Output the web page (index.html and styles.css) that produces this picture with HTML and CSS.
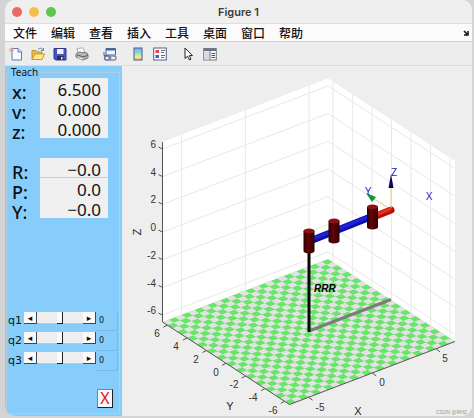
FILE: index.html
```
<!DOCTYPE html>
<html lang="zh">
<head>
    <meta charset="UTF-8">
    <meta name="viewport" content="width=device-width, initial-scale=1.0">
    <title>Figure 1</title>
    <link rel="stylesheet" href="styles.css">
</head>
<body>

<div class="window">
    <!-- 标题栏 -->
    <header class="titlebar">
        <div class="lights">
            <button class="light red" aria-label="关闭"></button>
            <button class="light yellow" aria-label="最小化"></button>
            <button class="light green" aria-label="缩放"></button>
        </div>
        <h1>Figure 1</h1>
    </header>

    <!-- 菜单 -->
    <nav class="menubar">
        <button>文件</button>
        <button>编辑</button>
        <button>查看</button>
        <button>插入</button>
        <button>工具</button>
        <button>桌面</button>
        <button>窗口</button>
        <button>帮助</button>
        <button class="dock" aria-label="停靠">
            <svg width="6" height="6" viewBox="0 0 6 6"><path d="M1 1L4 4M5 1V5H1" fill="none" stroke="#111" stroke-width="1.5"/></svg>
        </button>
    </nav>

    <!-- 工具栏 -->
    <div class="toolbar">
        <button aria-label="新建">
            <svg viewBox="0 0 14 14"><path d="M3 1.500H9L12.500 5V13H3Z" fill="#f8fbff" stroke="#607da8"/><path d="M9 1.500V5H12.500" fill="#cfdcf0" stroke="#607da8"/><path d="M0 3H5M2.500 .5V5.500M.8 1.200L4.200 4.800M4.200 1.200L.8 4.800" stroke="#ee9a75"/></svg>
        </button>
        <button aria-label="打开">
            <svg viewBox="0 0 14 14"><path d="M1 12.500V3.500H5L6 5H11V12.500Z" fill="#e9bd45" stroke="#b8923a"/><path d="M1 12.500L4 7H13.500L11 12.500Z" fill="#ffe98c" stroke="#c39a35"/><path d="M7 2.500C9 .5 11 1 12 3M12.500 1V3.500H10" fill="none" stroke="#5d8398"/></svg>
        </button>
        <button aria-label="保存">
            <svg viewBox="0 0 14 14"><path d="M1 1.500H13V13H2.500L1 11.500Z" fill="#4854bb" stroke="#30398d"/><path d="M4 2H10.500V7H4Z" fill="#eaf0ff"/><path d="M4 9H10.500V13H4Z" fill="#252c67"/><path d="M8 10H9.500V12.500H8Z" fill="#eee"/></svg>
        </button>
        <button aria-label="打印">
            <svg viewBox="0 0 14 14"><path d="M3 6L2 1.500L8 .8L10 6" fill="#fff" stroke="#aaa"/><path d="M1 7L4 5L12 6L13 8V11L8 13L1 10Z" fill="#b9b9b9" stroke="#777"/><path d="M2 8L9 10L13 8" fill="none" stroke="#555"/><path d="M3 10.500L8 12" stroke="#eee"/></svg>
        </button>
        <button class="gap" aria-label="链接绘图">
            <svg viewBox="0 0 14 14"><path d="M3 1.500H12.500V8H3Z" fill="#eef5ff" stroke="#49649a"/><path d="M3 2.500H12.500" stroke="#49649a" stroke-width="2"/><path d="M1 5V8.500H4" fill="none" stroke="#49649a"/><rect x="1.500" y="9" width="6" height="4" rx="2" fill="none" stroke="#5a6f96" stroke-width="1.400"/><rect x="6" y="9" width="7" height="4" rx="2" fill="none" stroke="#7b8caa" stroke-width="1.400"/></svg>
        </button>
        <button class="gap" aria-label="颜色栏">
            <svg viewBox="0 0 14 14"><defs><linearGradient id="bar" x2="0" y2="1"><stop stop-color="#83a6ed"/><stop offset=".4" stop-color="#7ee0dc"/><stop offset=".75" stop-color="#f4ee8c"/><stop offset="1" stop-color="#eeae75"/></linearGradient></defs><rect x="3" y="1" width="8" height="12" fill="url(#bar)" stroke="#4d5b88"/></svg>
        </button>
        <button aria-label="图例">
            <svg viewBox="0 0 14 14"><rect x=".7" y="1" width="12.600" height="12" fill="#fff" stroke="#555c87"/><path d="M2.500 3H6V6H2.500Z" fill="#e24540"/><path d="M2.500 8H6V11H2.500Z" fill="#475bd0"/><path d="M8 3.500H12M8 5.500H11M8 8.500H12M8 10.500H11" stroke="#666"/></svg>
        </button>
        <button class="gap" aria-label="编辑绘图">
            <svg viewBox="0 0 14 14"><path d="M4 1V11.500L6.500 9.200L8.500 13L10 12.200L8.300 8.600H11.500Z" fill="#fff" stroke="#222"/></svg>
        </button>
        <button aria-label="属性检查器">
            <svg viewBox="0 0 14 14"><rect x=".7" y="1.500" width="12.600" height="11.500" fill="#f7f7f7" stroke="#777b86"/><path d="M1 3H13" stroke="#5f7090" stroke-width="2"/><path d="M1.500 4.500H6.500V12.500H1.500Z" fill="#d9d9d9"/><path d="M7 4V13" stroke="#777"/><path d="M8.500 6.500H12M8.500 8.500H12M8.500 10.500H12" stroke="#555"/></svg>
        </button>
    </div>

    <main class="content">
        <!-- 示教面板 -->
        <aside class="side">
            <fieldset class="teach">
                <legend>Teach</legend>
                <dl class="pose">
                    <dt>x:</dt><dd>6.500</dd>
                    <dt>v:</dt><dd>0.000</dd>
                    <dt>z:</dt><dd>0.000</dd>
                </dl>
                <dl class="pose">
                    <dt>R:</dt><dd class="line">−0.0</dd>
                    <dt>P:</dt><dd>0.0</dd>
                    <dt>Y:</dt><dd>−0.0</dd>
                </dl>
                <div class="joints">
                    <div class="joint">
                        <label for="q1">q1</label>
                        <button aria-label="q1 减">◂</button>
                        <input type="range" id="q1" min="-180" max="180" value="0">
                        <button aria-label="q1 加">▸</button>
                        <output for="q1">0</output>
                    </div>
                    <div class="joint">
                        <label for="q2">q2</label>
                        <button aria-label="q2 减">◂</button>
                        <input type="range" id="q2" min="-180" max="180" value="0">
                        <button aria-label="q2 加">▸</button>
                        <output for="q2">0</output>
                    </div>
                    <div class="joint">
                        <label for="q3">q3</label>
                        <button aria-label="q3 减">◂</button>
                        <input type="range" id="q3" min="-180" max="180" value="0">
                        <button aria-label="q3 加">▸</button>
                        <output for="q3">0</output>
                    </div>
                </div>
                <button class="quit">X</button>
            </fieldset>
        </aside>

        <!-- 三维坐标区 -->
        <svg class="plot" viewBox="122 66 350 350">
            <defs>
                <pattern id="tiles" width="2" height="2" patternUnits="userSpaceOnUse" patternTransform="matrix(6.365 -2.423 4.885 3.173 162.5 322)">
                    <rect width="2" height="2" fill="#e4e1e2"/>
                    <path d="M1 0H2V1H1ZM0 1H1V2H0Z" fill="#69e56c"/>
                </pattern>
                <linearGradient id="joint">
                    <stop stop-color="#2c0000"/>
                    <stop offset=".4" stop-color="#620508"/>
                    <stop offset="1" stop-color="#300000"/>
                </linearGradient>
                <g id="cylinder">
                    <path d="M-5.500 2V22A5.500 2.500 0 0 0 5.500 22V2Z" fill="url(#joint)"/>
                    <ellipse cy="2" rx="5.500" ry="2.500" fill="#8c1014"/>
                </g>
            </defs>

            <path d="M162.500 322V142L328 78.500L455 161V341.500L328 259Z" fill="#fff"/>
            <path class="grid" d="M181.600 315V135M245.300 290V110M309 266V86M332.900 262V82M352.400 275V95M372 287.500V107.500M391.500 300V120M411 313V133M430.600 325.500V145.500M450 338V158"/>
            <path class="grid" d="M162.500 315L328 252L455 334.500M162.500 287.400L328 224.400L455 306.900M162.500 259.700L328 196.700L455 279.200M162.500 232L328 169L455 251.500M162.500 204.300L328 141.300L455 223.800M162.500 176.600L328 113.600L455 196.100M162.500 149L328 86L455 168.500"/>
            <path d="M162.500 322L289.500 404.500L455 341.500L328 259Z" fill="url(#tiles)"/>
            <path class="axis" d="M162.500 142V322L289.500 404.500L455 341.500"/>
            <path class="axis" d="M162.500 315l-4-2M162.500 287.400l-4-2M162.500 259.700l-4-2M162.500 232l-4-2M162.500 204.300l-4-2M162.500 176.600l-4-2M162.500 149l-4-2"/>
            <path class="axis" d="M167.400 325.200l-4 2M187 338l-4 2M206.500 350.500l-4 2M226 363.300l-4 2M245.600 376l-4 2M265 388.600l-4 2M284.700 401.300l-4 2M308.600 397.200l4 3M372.300 373l4 3M436 348.800l4 3"/>

            <g class="ticks" text-anchor="end">
                <text x="156" y="148">6</text>
                <text x="156" y="176">4</text>
                <text x="156" y="203">2</text>
                <text x="156" y="231">0</text>
                <text x="156" y="259">-2</text>
                <text x="156" y="287">-4</text>
                <text x="156" y="314">-6</text>
            </g>
            <g class="ticks" text-anchor="middle">
                <text x="157" y="337">6</text>
                <text x="176" y="350">4</text>
                <text x="196" y="363">2</text>
                <text x="216" y="376">0</text>
                <text x="234" y="388">-2</text>
                <text x="253" y="401">-4</text>
                <text x="273" y="414">-6</text>
                <text x="320" y="411">-5</text>
                <text x="382" y="386">0</text>
                <text x="445" y="362">5</text>
            </g>
            <g class="names" text-anchor="middle">
                <text transform="translate(141 232) rotate(-90)">Z</text>
                <text x="230" y="410">Y</text>
                <text x="358" y="415">X</text>
            </g>

            <!-- 机械臂 -->
            <path d="M309 331L391 299.500" stroke="#7c7c79" stroke-width="3"/>
            <path d="M309 248V332" stroke="#080808" stroke-width="3"/>
            <path d="M310 241L373 216" stroke="#1010a8" stroke-width="7"/>
            <path d="M310 240L373 215" stroke="#2020dd" stroke-width="3"/>
            <path d="M376 216L391 210" stroke="#b51006" stroke-width="7" stroke-linecap="round"/>
            <path d="M376 215L390 209" stroke="#ee2d1c" stroke-width="3" stroke-linecap="round"/>
            <use href="#cylinder" x="309" y="229"/>
            <use href="#cylinder" x="334" y="219"/>
            <use href="#cylinder" x="372.500" y="205"/>
            <path d="M391 208V188M387 207L374 199" stroke="#e6c990" fill="none"/>
            <path d="M391 174L388.500 188H393.500Z" fill="#08085c"/>
            <path d="M366 193L376 197L372 202Z" fill="#149638"/>
            <g class="frame" text-anchor="middle">
                <text x="394" y="176">Z</text>
                <text x="368" y="195">Y</text>
                <text x="429" y="200">X</text>
            </g>
            <text class="robot" x="314" y="292">RRR</text>
            <text class="mark" x="436" y="414">CSDN @RHZ_J</text>
        </svg>
    </main>
</div>

</body>
</html>
```
FILE: styles.css
```
* {
    box-sizing: border-box;
}
body {
    margin: 0;
    min-height: 100vh;
    display: flex;
    padding: 0 2px 2px 5px;
    background: #d4d4d4;
    font-family: "Noto Sans", "Noto Sans CJK SC", sans-serif;
    color: #111;
}
button {
    margin: 0;
    padding: 0;
    border: none;
    background: none;
    font: inherit;
    color: inherit;
}
.window {
    flex: 1;
    display: flex;
    flex-direction: column;
    background: #eee;
    border-radius: 10px;
    overflow: hidden;
}

/* 标题栏 */
.titlebar {
    display: grid;
    grid-template-columns: 1fr auto 1fr;
    align-items: center;
    height: 24px;
    padding: 0 7px;
    background: #f0efef;
    border-bottom: 1px solid #dedede;
}
.titlebar h1 {
    margin: 0;
    font: 600 11px "Inter", sans-serif;
    color: #3c3c3c;
}
.lights {
    display: flex;
    gap: 7px;
}
.light {
    width: 10px;
    height: 10px;
    border-radius: 50%;
}
.red {
    background: #ec6a5e;
}
.yellow {
    background: #f4bf4f;
}
.green {
    background: #61c554;
}

/* 菜单 */
.menubar {
    display: flex;
    align-items: center;
    gap: 14px;
    height: 18px;
    padding: 0 3px 0 8px;
    background: #fbfbfb;
    border-bottom: 1px solid #d0d0d0;
    font: 500 12px "Noto Sans CJK SC", sans-serif;
}
.dock {
    display: flex;
    margin-left: auto;
}

/* 工具栏 */
.toolbar {
    display: flex;
    align-items: center;
    gap: 8px;
    height: 24px;
    padding: 0 4px;
    background: #ededed;
    border-bottom: 1px solid #dcdcdc;
}
.toolbar button {
    display: flex;
}
.toolbar svg {
    width: 14px;
    height: 14px;
}
.toolbar .gap {
    margin-left: 6px;
}
.content {
    flex: 1;
    display: flex;
}

/* 示教面板 */
.side {
    width: 117px;
    display: flex;
    padding: 0 1px 2px;
    background: #87cdfb;
    border-right: 1px solid #9fc6df;
}
.teach {
    flex: 1;
    display: flex;
    flex-direction: column;
    min-width: 0;
    margin: 0;
    padding: 0 1px 5px;
    border: 1px solid #b4cedd;
}
.teach legend {
    margin-left: 1px;
    padding: 0 2px;
    font-size: 10px;
    line-height: 12px;
}
.pose {
    display: grid;
    grid-template-columns: 30px 68px;
    grid-auto-rows: 20px;
    margin: 0 0 20px;
    padding-left: 2px;
    font-size: 17px;
    line-height: 24px;
}
.pose dt {
    padding-left: 2px;
    font-size: 18px;
    font-weight: 500;
    line-height: 28px;
}
.pose dd {
    margin: 0;
    padding-right: 7px;
    background: #f0f0f0;
    text-align: right;
}
.pose .line {
    border-bottom: 1px solid #a6d5f5;
}
.joints {
    display: grid;
    gap: 4px;
    margin-top: auto;
}
.joint {
    display: grid;
    grid-template-columns: 16px 13px 1fr 13px 22px;
    height: 16px;
}
.joint label {
    font: 11px/18px "DejaVu Sans", sans-serif;
}
.joint button {
    height: 12px;
    background: #fafafa;
    border-right: 1px solid #444;
    border-bottom: 1px solid #444;
    font: 9px/10px "DejaVu Sans", sans-serif;
}
.joint input {
    appearance: none;
    width: 100%;
    min-width: 0;
    height: 12px;
    margin: 0;
    background: #eee;
    border-bottom: 1px solid #c5c5c5;
}
.joint input::-webkit-slider-thumb {
    appearance: none;
    width: 6px;
    height: 12px;
    background: #fafafa;
    border-right: 1px solid #222;
    border-bottom: 1px solid #222;
}
.joint output {
    padding-left: 3px;
    border-right: 1px solid #78b8e2;
    border-bottom: 1px solid #78b8e2;
    font: 8px/18px "DejaVu Sans", sans-serif;
}
.quit {
    align-self: flex-end;
    width: 16px;
    height: 19px;
    margin: 21px 5px 0 0;
    background: #fafafa;
    border: 1px solid #7a7aca;
    border-right-color: #222;
    border-bottom-color: #222;
    color: #e8101c;
    font-size: 16px;
    line-height: 17px;
}

/* 坐标区 */
.plot {
    flex: 1;
    min-width: 0;
    font-family: "Liberation Sans", Arial, sans-serif;
}
.grid {
    fill: none;
    stroke: #e8e8e8;
    stroke-width: 1;
}
.axis {
    fill: none;
    stroke: #555;
    stroke-width: 1;
}
.ticks {
    font-size: 10px;
    fill: #333;
}
.names {
    font-size: 11px;
    fill: #222;
}
.frame {
    font-size: 10px;
    fill: #2020d0;
}
.robot {
    font-size: 10px;
    font-weight: bold;
    font-style: italic;
}
.mark {
    font-size: 5px;
    fill: #999;
}
```
